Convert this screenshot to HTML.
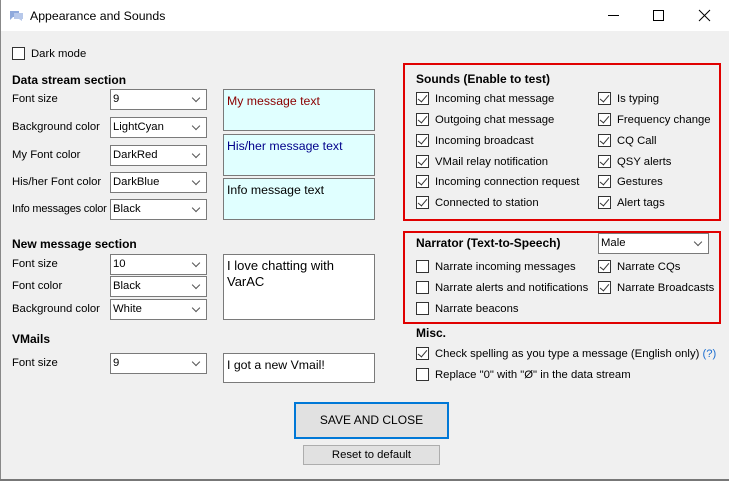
<!DOCTYPE html>
<html><head><style>
*{margin:0;padding:0;box-sizing:border-box}
body{width:729px;height:481px;background:#f0f0f0;font-family:"Liberation Sans",sans-serif;font-size:11.3px;color:#000;position:relative;overflow:hidden}
.a{position:absolute;white-space:nowrap}
.t{position:absolute;white-space:nowrap;line-height:14px}
.b{font-weight:bold;font-size:12px}
.cb{position:absolute;width:13px;height:13px;border:1px solid #333;background:#fff}
.cb.c::after{content:"";position:absolute;left:3px;top:0px;width:4px;height:8px;border:solid #333;border-width:0 1.3px 1.3px 0;transform:rotate(40deg)}
.combo{position:absolute;height:21px;border:1px solid #7a7a7a;background:#fff;padding:2px 0 0 2px;line-height:15px}
.combo::after{content:"";position:absolute;right:7px;top:5px;width:5px;height:5px;border:solid #555;border-width:0 1px 1px 0;transform:rotate(45deg)}
.pv{position:absolute;border:1px solid #7a7a7a;padding:3px 3px;font-size:12.3px;line-height:17px}
.red{position:absolute;border:2px solid #e00000}
</style></head><body>
<div class="a" style="left:0;top:0;width:729px;height:31px;background:#fff"></div>
<div class="a" style="left:0;top:0;width:1px;height:481px;background:#888"></div>
<div class="a" style="left:0;top:479px;width:729px;height:2px;background:#777"></div>
<svg class="a" style="left:8px;top:9px" width="16" height="13"><path d="M2 2h9v6H5l-3 3z" fill="#8fa9dc"/><path d="M6 4h9v6h-1v2l-3-2H6z" fill="#b7c8ea"/></svg>
<div class="t" style="left:30px;top:9px;font-size:12.3px">Appearance and Sounds</div>
<div class="a" style="left:608px;top:15px;width:11px;height:1px;background:#000"></div>
<div class="a" style="left:653px;top:10px;width:11px;height:11px;border:1px solid #000"></div>
<svg class="a" style="left:698px;top:9px" width="13" height="13"><path d="M1 1L12 12M12 1L1 12" stroke="#000" stroke-width="1"/></svg>

<div class="cb" style="left:12px;top:47px"></div><div class="t" style="left:31px;top:47px">Dark mode</div>
<div class="t b" style="left:12px;top:73px">Data stream section</div>
<div class="t" style="left:12px;top:92px">Font size</div>
<div class="t" style="left:12px;top:120px">Background color</div>
<div class="t" style="left:12px;top:148px">My Font color</div>
<div class="t" style="left:12px;top:175px">His/her Font color</div>
<div class="t" style="left:12px;top:202px;font-size:11px;letter-spacing:-0.2px">Info messages color</div>
<div class="combo" style="left:110px;top:89px;width:97px">9</div>
<div class="combo" style="left:110px;top:117px;width:97px">LightCyan</div>
<div class="combo" style="left:110px;top:145px;width:97px">DarkRed</div>
<div class="combo" style="left:110px;top:172px;width:97px">DarkBlue</div>
<div class="combo" style="left:110px;top:199px;width:97px">Black</div>
<div class="pv" style="left:223px;top:89px;width:152px;height:42px;background:#e0ffff;color:#8b0000">My message text</div>
<div class="pv" style="left:223px;top:134px;width:152px;height:42px;background:#e0ffff;color:#00008b">His/her message text</div>
<div class="pv" style="left:223px;top:178px;width:152px;height:42px;background:#e0ffff">Info message text</div>

<div class="t b" style="left:12px;top:237px">New message section</div>
<div class="t" style="left:12px;top:257px">Font size</div>
<div class="t" style="left:12px;top:279px">Font color</div>
<div class="t" style="left:12px;top:302px">Background color</div>
<div class="combo" style="left:110px;top:254px;width:97px">10</div>
<div class="combo" style="left:110px;top:276px;width:97px">Black</div>
<div class="combo" style="left:110px;top:299px;width:97px">White</div>
<div class="pv" style="left:223px;top:254px;width:152px;height:66px;background:#fff;font-size:13px;line-height:16px">I love chatting with VarAC</div>
<div class="t b" style="left:12px;top:332px">VMails</div>
<div class="t" style="left:12px;top:356px">Font size</div>
<div class="combo" style="left:110px;top:353px;width:97px">9</div>
<div class="pv" style="left:223px;top:353px;width:152px;height:30px;background:#fff">I got a new Vmail!</div>

<div class="a" style="left:294px;top:402px;width:155px;height:37px;border:2px solid #0078d7;background:#e1e1e1;text-align:center;line-height:33px;font-size:12px">SAVE AND CLOSE</div>
<div class="a" style="left:303px;top:445px;width:137px;height:20px;border:1px solid #adadad;background:#e1e1e1;text-align:center;line-height:18px">Reset to default</div>

<div class="red" style="left:403px;top:63px;width:318px;height:158px"></div>
<div class="t b" style="left:416px;top:72px">Sounds (Enable to test)</div>
<div class="red" style="left:403px;top:231px;width:318px;height:93px"></div>
<div class="t b" style="left:416px;top:236px">Narrator (Text-to-Speech)</div>
<div class="combo" style="left:598px;top:233px;width:111px">Male</div>

<div class="cb c" style="left:416px;top:92px"></div><div class="t" style="left:435px;top:92px">Incoming chat message</div>
<div class="cb c" style="left:416px;top:113px"></div><div class="t" style="left:435px;top:113px">Outgoing chat message</div>
<div class="cb c" style="left:416px;top:134px"></div><div class="t" style="left:435px;top:134px">Incoming broadcast</div>
<div class="cb c" style="left:416px;top:155px"></div><div class="t" style="left:435px;top:155px">VMail relay notification</div>
<div class="cb c" style="left:416px;top:175px"></div><div class="t" style="left:435px;top:175px">Incoming connection request</div>
<div class="cb c" style="left:416px;top:196px"></div><div class="t" style="left:435px;top:196px">Connected to station</div>
<div class="cb c" style="left:598px;top:92px"></div><div class="t" style="left:617px;top:92px">Is typing</div>
<div class="cb c" style="left:598px;top:113px"></div><div class="t" style="left:617px;top:113px">Frequency change</div>
<div class="cb c" style="left:598px;top:134px"></div><div class="t" style="left:617px;top:134px">CQ Call</div>
<div class="cb c" style="left:598px;top:155px"></div><div class="t" style="left:617px;top:155px">QSY alerts</div>
<div class="cb c" style="left:598px;top:175px"></div><div class="t" style="left:617px;top:175px">Gestures</div>
<div class="cb c" style="left:598px;top:196px"></div><div class="t" style="left:617px;top:196px">Alert tags</div>

<div class="cb" style="left:416px;top:260px"></div><div class="t" style="left:435px;top:260px">Narrate incoming messages</div>
<div class="cb" style="left:416px;top:281px"></div><div class="t" style="left:435px;top:281px">Narrate alerts and notifications</div>
<div class="cb" style="left:416px;top:302px"></div><div class="t" style="left:435px;top:302px">Narrate beacons</div>
<div class="cb c" style="left:598px;top:260px"></div><div class="t" style="left:617px;top:260px">Narrate CQs</div>
<div class="cb c" style="left:598px;top:281px"></div><div class="t" style="left:617px;top:281px">Narrate Broadcasts</div>

<div class="t b" style="left:416px;top:326px">Misc.</div>
<div class="cb c" style="left:416px;top:347px"></div><div class="t" style="left:435px;top:347px">Check spelling as you type a message (English only) <span style="color:#1e6fd0">(?)</span></div>
<div class="cb" style="left:416px;top:368px"></div><div class="t" style="left:435px;top:368px">Replace "0" with "Ø" in the data stream</div>
</body></html>
